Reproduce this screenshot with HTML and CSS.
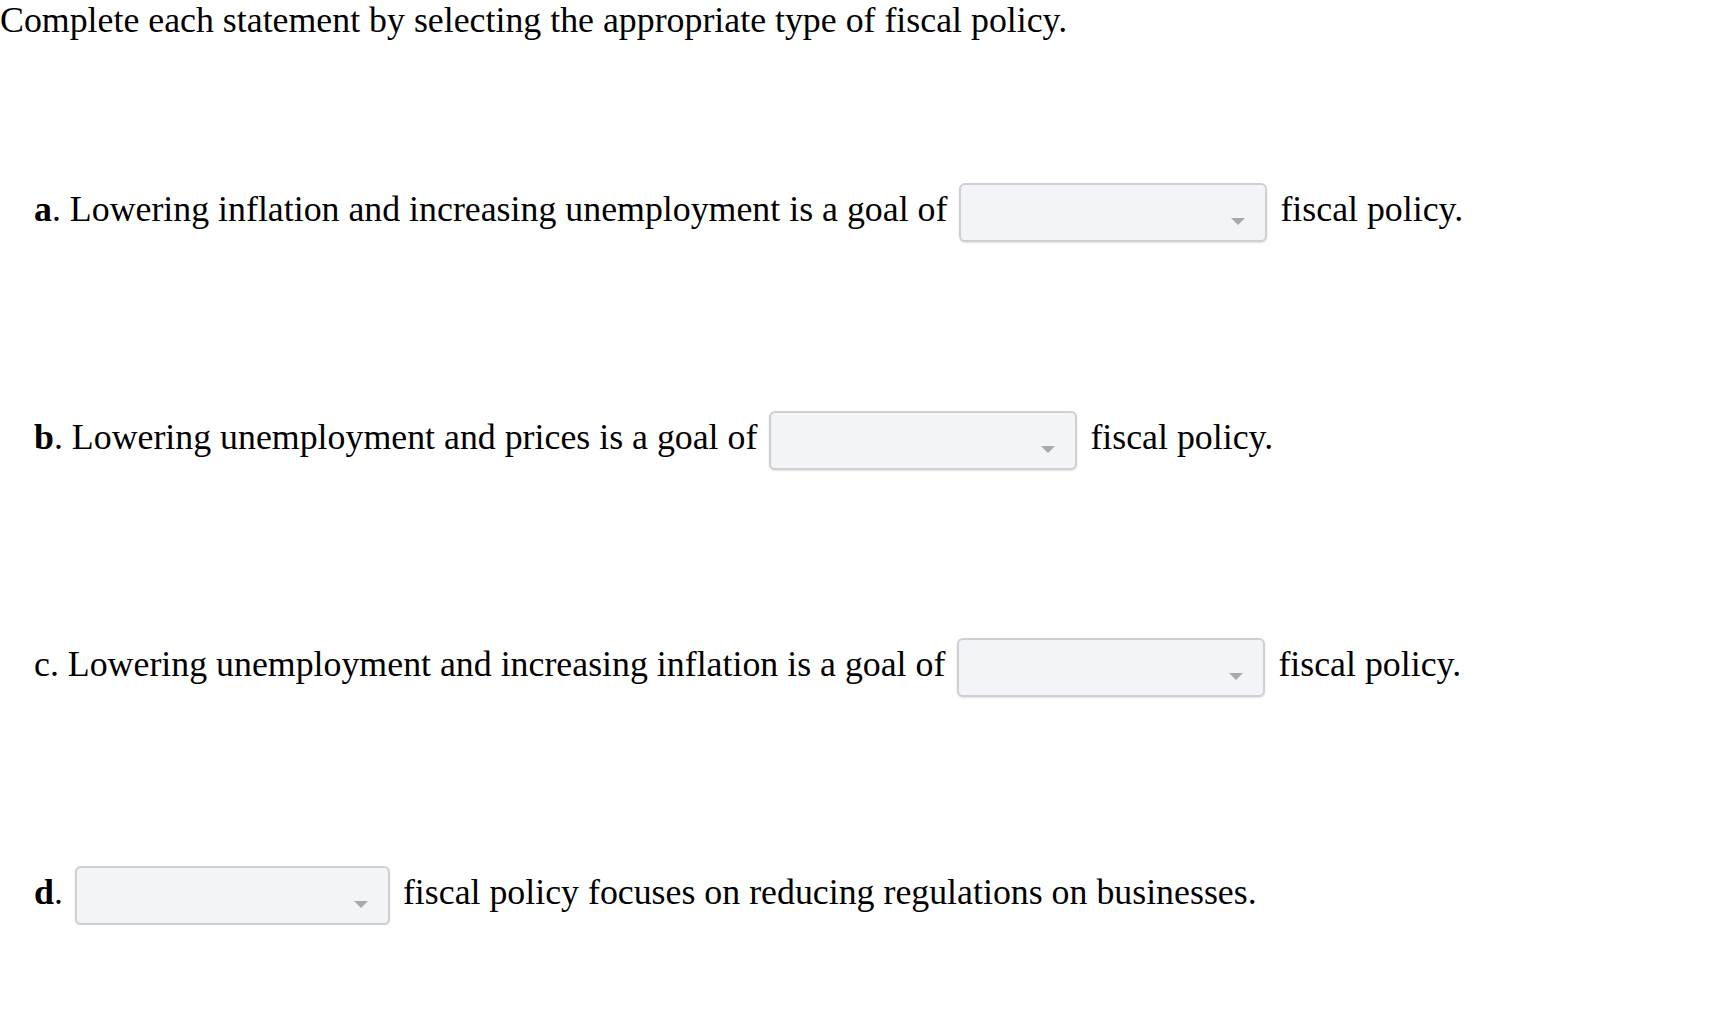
FILE: index.html
```html
<!DOCTYPE html>
<html lang="en">
<head>
<meta charset="utf-8">
<title>Fiscal policy</title>
<link rel="stylesheet" href="styles.css">
</head>
<body>
<div class="page">
  <p class="prompt">Complete each statement by selecting the appropriate type of fiscal policy.</p>
  <div class="items">
    <div class="row">
      <span class="text"><b>a</b>. Lowering inflation and increasing unemployment is a goal of</span>
      <span class="dropdown"><span class="caret"></span></span>
      <span class="text">fiscal policy.</span>
    </div>
    <div class="row">
      <span class="text"><b>b</b>. Lowering unemployment and prices is a goal of</span>
      <span class="dropdown"><span class="caret"></span></span>
      <span class="text">fiscal policy.</span>
    </div>
    <div class="row">
      <span class="text">c. Lowering unemployment and increasing inflation is a goal of</span>
      <span class="dropdown"><span class="caret"></span></span>
      <span class="text">fiscal policy.</span>
    </div>
    <div class="row">
      <span class="text"><b>d</b>.</span>
      <span class="dropdown wide"><span class="caret"></span></span>
      <span class="text">fiscal policy focuses on reducing regulations on businesses.</span>
    </div>
  </div>
</div>
</body>
</html>
```

FILE: styles.css
```css
html, body {
  margin: 0;
  padding: 0;
  background: #ffffff;
}

body {
  font-family: "Liberation Serif", "Times New Roman", serif;
  font-size: 35.85px;
  color: #000000;
}

.page {
  display: flex;
  flex-direction: column;
}

.prompt {
  margin: 0;
  line-height: 41px;
  height: 41px;
}

.items {
  display: flex;
  flex-direction: column;
  gap: 168.5px;
  padding-left: 34px;
  margin-top: 142px;
}

.row {
  display: flex;
  align-items: center;
  gap: 12px;
  height: 59px;
}

.text {
  white-space: nowrap;
  line-height: 41px;
  position: relative;
  top: -3px;
}

.text b {
  font-weight: bold;
}

.dropdown {
  box-sizing: border-box;
  width: 308px;
  height: 59px;
  border: 2px solid #cfcfd2;
  border-radius: 6px;
  background: #f3f4f7;
  box-shadow: 0 1px 2px rgba(0, 0, 0, 0.12);
  display: flex;
  justify-content: flex-end;
  align-items: flex-end;
  padding: 0 20px 15px 0;
  margin-right: 1px;
}

.dropdown.wide {
  width: 315px;
}

.caret {
  width: 0;
  height: 0;
  border-left: 7px solid transparent;
  border-right: 7px solid transparent;
  border-top: 7px solid #a9a9ab;
}
```
